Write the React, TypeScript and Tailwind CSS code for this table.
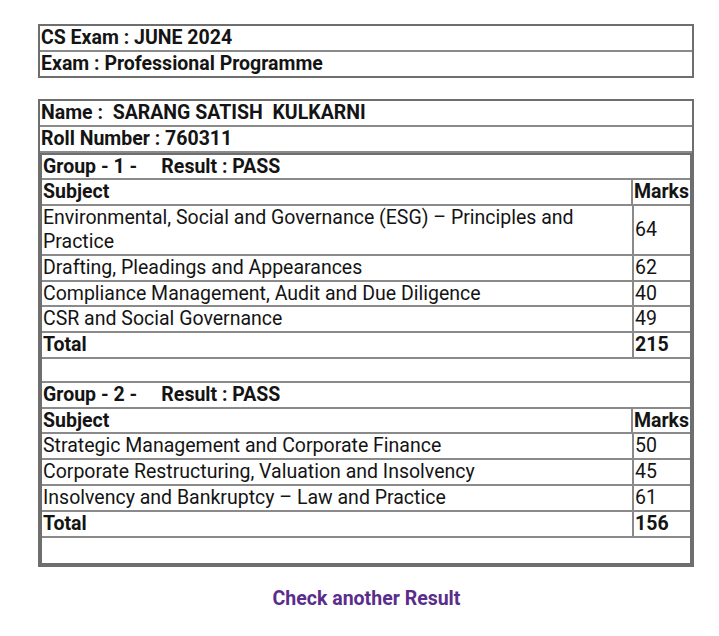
import React from 'react';

type Subject = { name: string; marks: string };

const group1: Subject[] = [
  { name: 'Environmental, Social and Governance (ESG) – Principles and Practice', marks: '64' },
  { name: 'Drafting, Pleadings and Appearances', marks: '62' },
  { name: 'Compliance Management, Audit and Due Diligence', marks: '40' },
  { name: 'CSR and Social Governance', marks: '49' },
];

const group2: Subject[] = [
  { name: 'Strategic Management and Corporate Finance', marks: '50' },
  { name: 'Corporate Restructuring, Valuation and Insolvency', marks: '45' },
  { name: 'Insolvency and Bankruptcy – Law and Practice', marks: '61' },
];

const Row: React.FC<{ left: string; right: string; bold?: boolean }> = ({ left, right, bold }) => (
  <div className={`flex border-t-2 border-[#8a8a8a] leading-[23.8px] ${bold ? 'font-bold' : ''}`}>
    <div className="w-[590px] px-[1px]">{left}</div>
    <div className="flex-1 flex items-center border-l-2 border-[#8a8a8a] px-[1px]">{right}</div>
  </div>
);

const Group: React.FC<{ no: number; subjects: Subject[]; total: string; first?: boolean; last?: boolean }> = ({ no, subjects, total, first, last }) => (
  <>
    <div className={`${first ? '' : 'border-t-2 border-[#8a8a8a]'} px-[1px] leading-[23.8px] font-bold whitespace-pre`}>
      {`Group - ${no} -     Result : PASS`}
    </div>
    <Row left="Subject" right="Marks" bold />
    {subjects.map(s => (
      <Row key={s.name} left={s.name} right={s.marks} />
    ))}
    <Row left="Total" right={total} bold />
    {/* blank spacer row */}
    <div className={`border-t-2 border-[#8a8a8a] ${last ? 'h-[27px]' : 'h-[23.8px]'}`} />
  </>
);

export default function App() {
  return (
    <div className="min-h-[636px] bg-white pt-[24px] font-['Roboto',sans-serif] text-[19.5px] text-[#141414]">
      <div className="ml-[38px] w-[656px]">
        {/* Exam header */}
        <div className="border-2 border-[#6e6e6e] font-bold">
          <div className="px-[1px] leading-[24px]">CS Exam : JUNE 2024</div>
          <div className="border-t-2 border-[#8a8a8a] px-[1px] leading-[24px]">Exam : Professional Programme</div>
        </div>

        {/* Result table */}
        <div className="mt-[21px] border-2 border-[#6e6e6e]">
          <div className="px-[1px] leading-[23.8px] font-bold whitespace-pre">Name :  SARANG SATISH  KULKARNI</div>
          <div className="border-t-2 border-[#8a8a8a] px-[1px] leading-[23.8px] font-bold">Roll Number : 760311</div>
          <div className="border-t-2 border-[#8a8a8a]">
            <div className="border-2 border-[#6e6e6e]">
              <Group no={1} subjects={group1} total="215" first />
              <Group no={2} subjects={group2} total="156" last />
            </div>
          </div>
        </div>
      </div>

      <div className="mt-[17px] pl-[14px] text-center">
        <a href="#" className="font-bold text-[#5a2d8c] leading-[24px]">Check another Result</a>
      </div>
    </div>
  );
}
